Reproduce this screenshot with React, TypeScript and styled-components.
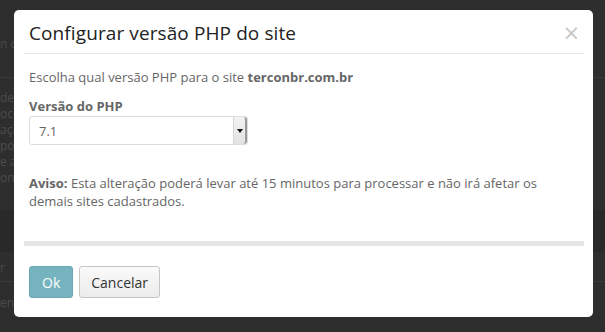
import styled, { createGlobalStyle } from 'styled-components';

const GlobalStyle = createGlobalStyle`
  html, body {
    margin: 0;
    padding: 0;
    background: #2e2e2e;
  }
  body {
    font-family: 'Open Sans', 'Noto Sans', sans-serif;
  }
`;

const Page = styled.div`
  position: relative;
  width: 605px;
  height: 332px;
  overflow: hidden;
  background: #2e2e2e;
`;

const Backdrop = styled.div`
  display: flex;
  flex-direction: column;
  color: #4c4c4c;
  font-size: 12px;
  line-height: 16px;
`;

const BackLine = styled.div<{ border?: boolean; dark?: boolean; height?: number; pad?: number }>`
  height: ${(p) => (p.height ? `${p.height}px` : '16px')};
  padding-top: ${(p) => p.pad ?? 0}px;
  box-sizing: border-box;
  border-bottom: ${(p) => (p.border ? '1px solid #3a3a3a' : 'none')};
  background: ${(p) => (p.dark ? '#292929' : 'transparent')};
`;

const Modal = styled.div`
  position: absolute;
  left: 14px;
  top: 10px;
  width: 579px;
  height: 307px;
  background: #fff;
  border-radius: 5px;
  padding: 0 9px 0 10px;
  box-sizing: border-box;
  display: flex;
  flex-direction: column;
`;

const Header = styled.div`
  display: flex;
  align-items: center;
  justify-content: space-between;
  height: 43px;
  padding: 0 4px 0 5px;
  border-bottom: 1px solid #e8e8e8;
`;

const Title = styled.h3`
  margin: 0;
  padding-top: 2px;
  font-size: 19px;
  font-weight: 400;
  letter-spacing: 0.1px;
  color: #222;
`;

const Close = styled.span`
  font-size: 21px;
  line-height: 1;
  color: #c8c8c8;
  font-family: 'DejaVu Sans', sans-serif;
  padding-top: 3px;
`;

const Body = styled.div`
  padding: 14px 5px 0;
  color: #666;
  font-size: 13px;
  line-height: 18px;
  height: 187px;
  box-sizing: border-box;
`;

const Intro = styled.p`
  margin: 0 0 11px;
`;

const Strong = styled.strong`
  font-weight: 700;
`;

const Label = styled.div`
  font-weight: 700;
  margin-bottom: 1px;
`;

const Select = styled.div`
  display: flex;
  align-items: center;
  justify-content: space-between;
  width: 219px;
  height: 29px;
  border: 1px solid #dcdcdc;
  border-radius: 3px;
  box-sizing: border-box;
  padding-left: 9px;
  color: #666;
  font-size: 13px;
`;

const SelectArrow = styled.span`
  width: 14px;
  height: 27px;
  box-sizing: border-box;
  background: linear-gradient(#f2f2f2, #e2e2e2);
  border-left: 1px solid #d6d6d6;
  border-right: 2px solid #9a9a9a;
  border-radius: 0 3px 3px 0;
  display: flex;
  align-items: center;
  justify-content: center;

  &::after {
    content: '';
    border-left: 3px solid transparent;
    border-right: 3px solid transparent;
    border-top: 4px solid #111;
  }
`;

const Notice = styled.p`
  margin: 29px 0 0;
`;

const ThickRule = styled.div`
  height: 5px;
  background: #e5e5e5;
`;

const Footer = styled.div`
  display: flex;
  gap: 6px;
  padding: 20px 5px 0;
`;

const Button = styled.button<{ primary?: boolean }>`
  font-family: 'Open Sans', 'Noto Sans', sans-serif;
  font-size: 14px;
  height: 32px;
  padding: 0 ${(p) => (p.primary ? 12 : 11)}px;
  border-radius: 3px;
  cursor: pointer;
  color: ${(p) => (p.primary ? '#fff' : '#333')};
  background: ${(p) => (p.primary ? '#75b4be' : 'linear-gradient(#fafafa, #ececec)')};
  border: 1px solid ${(p) => (p.primary ? '#6aa8b2' : '#c6c6c6')};
`;

export default function App() {
  return (
    <Page>
      <GlobalStyle />
      <Backdrop>
        <BackLine border height={78} pad={36}>n c</BackLine>
        <BackLine height={28} pad={12}>de</BackLine>
        <BackLine>oce</BackLine>
        <BackLine>açã</BackLine>
        <BackLine>po</BackLine>
        <BackLine>e a</BackLine>
        <BackLine height={40}>on</BackLine>
        <BackLine dark height={42} />
        <BackLine border height={30} pad={8}>r</BackLine>
        <BackLine height={30} pad={13}>enq</BackLine>
      </Backdrop>
      <Modal>
        <Header>
          <Title>Configurar versão PHP do site</Title>
          <Close>×</Close>
        </Header>
        <Body>
          <Intro>
            Escolha qual versão PHP para o site <Strong>terconbr.com.br</Strong>
          </Intro>
          <Label>Versão do PHP</Label>
          <Select>
            <span>7.1</span>
            <SelectArrow />
          </Select>
          <Notice>
            <Strong>Aviso:</Strong> Esta alteração poderá levar até 15 minutos para processar e não irá afetar os
            demais sites cadastrados.
          </Notice>
        </Body>
        <ThickRule />
        <Footer>
          <Button primary>Ok</Button>
          <Button>Cancelar</Button>
        </Footer>
      </Modal>
    </Page>
  );
}
